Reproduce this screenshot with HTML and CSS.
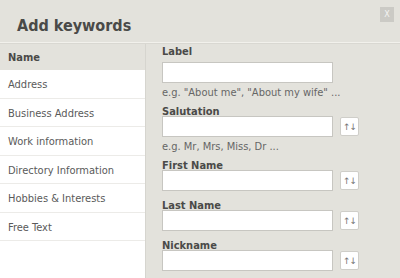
FILE: index.html
```html
<!DOCTYPE html>
<html lang="en">

<head>
  <meta charset="UTF-8" />
  <title>Add keywords</title>
  <link rel="stylesheet" href="styles.css">
</head>

<body>
  <div class="dialog">
    <div class="dialog-header">
      <h1>Add keywords</h1>
      <button class="close">X</button>
    </div>
    <div class="dialog-body">
      <div class="sidebar">
        <div class="sidebar-title">Name</div>
        <ul class="sidebar-list">
          <li>Address</li>
          <li>Business Address</li>
          <li>Work information</li>
          <li>Directory Information</li>
          <li>Hobbies &amp; Interests</li>
          <li>Free Text</li>
        </ul>
      </div>
      <div class="fields">
        <div class="field">
          <label>Label</label>
          <div class="row"><input type="text" /></div>
          <p class="hint">e.g. "About me", "About my wife" ...</p>
        </div>
        <div class="field">
          <label>Salutation</label>
          <div class="row"><input type="text" /><button class="swap">&uarr;&darr;</button></div>
          <p class="hint">e.g. Mr, Mrs, Miss, Dr ...</p>
        </div>
        <div class="field">
          <label>First Name</label>
          <div class="row"><input type="text" /><button class="swap">&uarr;&darr;</button></div>
        </div>
        <div class="field">
          <label>Last Name</label>
          <div class="row"><input type="text" /><button class="swap">&uarr;&darr;</button></div>
        </div>
        <div class="field">
          <label>Nickname</label>
          <div class="row"><input type="text" /><button class="swap">&uarr;&darr;</button></div>
        </div>
      </div>
    </div>
  </div>
</body>

</html>
```

FILE: styles.css
```css
* {
  margin: 0;
  padding: 0;
  box-sizing: border-box;
}

body {
  width: 400px;
  height: 278px;
  overflow: hidden;
  background: #e3e2dc;
  font-family: "DejaVu Sans Condensed", "DejaVu Sans", Verdana, sans-serif;
  font-size: 11px;
  color: #555;
}

.dialog {
  height: 278px;
  display: flex;
  flex-direction: column;
}

.dialog-header {
  height: 43px;
  display: flex;
  align-items: flex-start;
  justify-content: space-between;
  padding: 16px 6px 0 17px;
  border-bottom: 1px solid #f2f1ec;
  box-shadow: 0 1px 0 #d9d8d2;
}

.dialog-header h1 {
  font-size: 16px;
  line-height: 20px;
  font-weight: bold;
  color: #4a4a48;
}

.close {
  width: 14px;
  height: 15px;
  margin-top: -9px;
  border: none;
  background: #cbcac5;
  color: #f4f4f2;
  font-family: "DejaVu Sans", sans-serif;
  font-size: 8px;
  line-height: 15px;
}

.dialog-body {
  flex: 1;
  display: flex;
  margin-top: 1px;
}

.sidebar {
  width: 146px;
  display: flex;
  flex-direction: column;
  border-right: 1px solid #d6d5cf;
}

.sidebar-title {
  height: 26px;
  padding: 7px 8px 0;
  font-weight: bold;
  color: #4a4a48;
}

.sidebar-list {
  flex: 1;
  list-style: none;
  background: #fff;
}

.sidebar-list li {
  height: 28.5px;
  line-height: 29px;
  padding-left: 8px;
  border-bottom: 1px solid #ecebe8;
  color: #5a5a5a;
}

.fields {
  flex: 1;
  padding-left: 16px;
}

.field {
  margin-bottom: 5px;
}

.field label {
  display: block;
  height: 14px;
  line-height: 20px;
  font-weight: bold;
  color: #4a4a48;
}

.field:first-child label {
  height: 18px;
  line-height: 16px;
}

.row {
  display: flex;
  align-items: center;
  gap: 7px;
}

.row input {
  width: 171px;
  height: 21px;
  border: 1px solid #c7c6c1;
  background: #fff;
}

.swap {
  width: 19px;
  height: 19px;
  border: 1px solid #cfcec9;
  border-radius: 2px;
  background: #fff;
  color: #777;
  font-family: "DejaVu Sans", sans-serif;
  font-size: 9px;
  letter-spacing: -1px;
}

.hint {
  height: 14px;
  padding-top: 3px;
  line-height: 14px;
  color: #666;
}
```
